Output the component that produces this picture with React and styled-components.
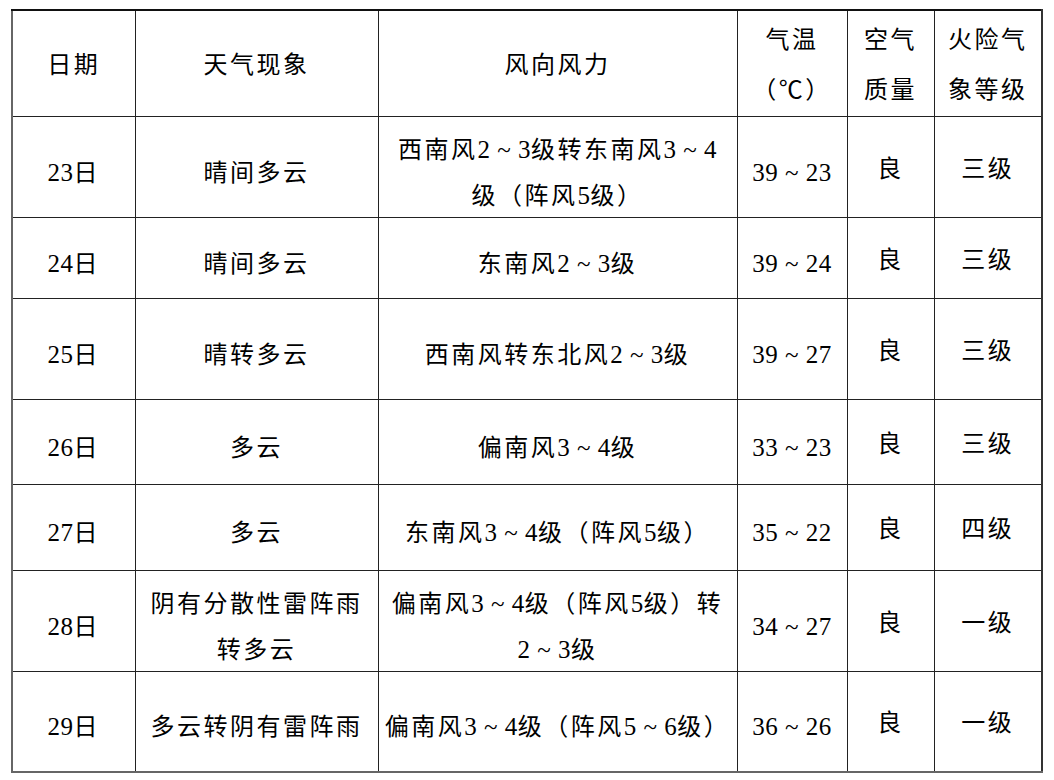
import * as React from "react";
import styled, { createGlobalStyle } from "styled-components";

const GlobalStyle = createGlobalStyle`
  html, body {
    margin: 0;
    padding: 0;
    background: #ffffff;
  }
  body {
    font-family: "Noto Sans CJK SC", "Noto Sans", sans-serif;
    color: #000;
  }
`;

const COLS = [123, 243, 359, 110, 87, 108];

const ROWS = [
  {
    day: "23日",
    weather: ["晴间多云"],
    wind: ["西南风2 ~ 3级转东南风3 ~ 4", "级（阵风5级）"],
    temp: "39 ~ 23",
    air: "良",
    fire: "三级",
    h: 101,
  },
  { day: "24日", weather: ["晴间多云"], wind: ["东南风2 ~ 3级"], temp: "39 ~ 24", air: "良", fire: "三级", h: 81 },
  { day: "25日", weather: ["晴转多云"], wind: ["西南风转东北风2 ~ 3级"], temp: "39 ~ 27", air: "良", fire: "三级", h: 101 },
  { day: "26日", weather: ["多云"], wind: ["偏南风3 ~ 4级"], temp: "33 ~ 23", air: "良", fire: "三级", h: 85 },
  { day: "27日", weather: ["多云"], wind: ["东南风3 ~ 4级（阵风5级）"], temp: "35 ~ 22", air: "良", fire: "四级", h: 86 },
  {
    day: "28日",
    weather: ["阴有分散性雷阵雨", "转多云"],
    wind: ["偏南风3 ~ 4级（阵风5级）转", "2 ~ 3级"],
    temp: "34 ~ 27",
    air: "良",
    fire: "一级",
    h: 100,
  },
  {
    day: "29日",
    weather: ["多云转阴有雷阵雨"],
    wind: ["偏南风3 ~ 4级（阵风5 ~ 6级）"],
    temp: "36 ~ 26",
    air: "良",
    fire: "一级",
    h: 101,
  },
];

const Page = styled.div`
  padding: 9px 0 0 11px;
`;

const Table = styled.table`
  border-collapse: collapse;
  table-layout: fixed;
  width: 1031px;
  border-top: 2px solid #111;
  border-left: 2px solid #666;
  border-bottom: 2px solid #666;
  border-right: 2px solid #333;
`;

const Row = styled.tr`
  height: ${(p) => p.$h}px;
`;

const Cell = styled.td`
  border: 1px solid #222;
  padding: ${(p) => (p.$low ? "8px 0 0" : "0")};
  text-align: center;
  vertical-align: middle;
  font-size: 24px;
  line-height: ${(p) => (p.$head ? "50px" : "46px")};
  letter-spacing: 2.5px;
  white-space: nowrap;
  overflow: visible;
  color: #000;
`;

const Line = styled.div`
  display: block;
  height: ${(p) => (p.$head ? 50 : 46)}px;
`;

const Num = styled.span`
  font-family: "Liberation Serif", "Times New Roman", serif;
  font-size: 25px;
  line-height: 1;
  letter-spacing: 0.5px;
`;

// digits and tildes are set in the narrow serif, the rest in CJK
const renderText = (str) =>
  str.split(/([0-9~ ]+)/).map((part, i) =>
    /^[0-9~ ]+$/.test(part) ? <Num key={i}>{part}</Num> : <React.Fragment key={i}>{part}</React.Fragment>
  );

const Lines = ({ lines, head }) =>
  lines.map((l, i) => (
    <Line key={i} $head={head}>
      {renderText(l)}
    </Line>
  ));

const App = () => {
  return (
    <Page>
      <GlobalStyle />
      <Table>
        <colgroup>
          {COLS.map((w, i) => (
            <col key={i} style={{ width: w }} />
          ))}
        </colgroup>
        <tbody>
          <Row $h={106}>
            <Cell $head>日期</Cell>
            <Cell $head>天气现象</Cell>
            <Cell $head>风向风力</Cell>
            <Cell $head>
              <Lines head lines={["气温", "（℃）"]} />
            </Cell>
            <Cell $head>
              <Lines head lines={["空气", "质量"]} />
            </Cell>
            <Cell $head>
              <Lines head lines={["火险气", "象等级"]} />
            </Cell>
          </Row>
          {ROWS.map((r) => (
            <Row key={r.day} $h={r.h}>
              <Cell $low>{renderText(r.day)}</Cell>
              <Cell $low>
                <Lines lines={r.weather} />
              </Cell>
              <Cell $low>
                <Lines lines={r.wind} />
              </Cell>
              <Cell $low>{renderText(r.temp)}</Cell>
              <Cell>{r.air}</Cell>
              <Cell>{r.fire}</Cell>
            </Row>
          ))}
        </tbody>
      </Table>
    </Page>
  );
};

export default App;
